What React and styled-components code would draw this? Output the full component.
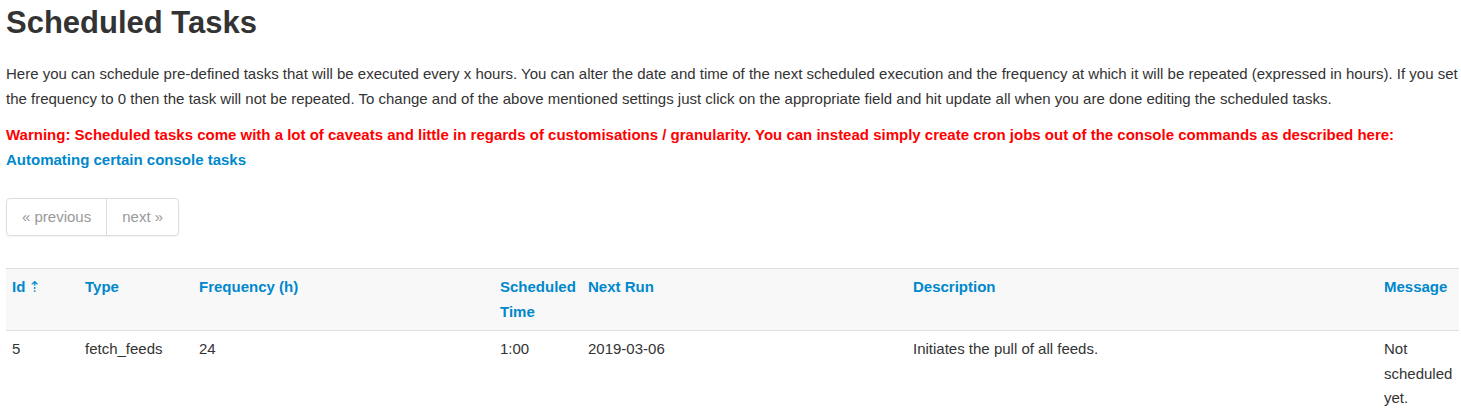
import React from "react";
import styled, { createGlobalStyle } from "styled-components";

const Global = createGlobalStyle`
  html, body { margin: 0; padding: 0; background: #fff; }
  body {
    font-family: "Liberation Sans", Arial, sans-serif;
    font-size: 15px;
    line-height: 24.5px;
    color: #333;
  }
`;

const Page = styled.div`
  padding: 0 2px 0 6px;
`;

const Title = styled.h2`
  margin: 3px 0 19px;
  font-size: 31px;
  line-height: 40px;
  font-weight: bold;
  color: #333;
`;

const Intro = styled.p`
  margin: 0 0 12px;
`;

const Warning = styled.p`
  margin: 0;
  color: #ff0000;
  font-weight: bold;
`;

const Link = styled.a`
  color: #0088cc;
  font-weight: bold;
  text-decoration: none;
`;

const Pager = styled.ul`
  display: inline-flex;
  list-style: none;
  margin: 26px 0 32px;
  padding: 0;
  border: 1px solid #ddd;
  border-radius: 4px;
  box-shadow: 0 1px 2px rgba(0, 0, 0, 0.05);
`;

const PagerItem = styled.li`
  padding: 6px 15px;
  line-height: 24px;
  color: #999;
  border-left: ${(p) => (p.$first ? "none" : "1px solid #ddd")};
`;

const Table = styled.table`
  width: 100%;
  border-collapse: collapse;
  table-layout: fixed;
  border-top: 1px solid #ddd;
`;

const HeadCell = styled.th`
  text-align: left;
  vertical-align: top;
  padding: 6px 6px;
  background: #f8f8f8;
  color: #0088cc;
  font-weight: bold;
  border-bottom: 1px solid #ddd;
`;

const Cell = styled.td`
  text-align: left;
  vertical-align: top;
  padding: 6px 6px;
`;

const SortIcon = styled.span`
  font-family: "DejaVu Sans", sans-serif;
  font-size: 15px;
  font-weight: normal;
  margin-left: 3px;
  color: #0088cc;
`;

const widths = [73, 114, 301, 88, 325, 471, 81];

export default function App() {
  return (
    <Page>
      <Global />
      <Title>Scheduled Tasks</Title>
      <Intro>
        Here you can schedule pre-defined tasks that will be executed every x hours. You can alter the date and time of the next scheduled execution and the frequency at which it will be repeated (expressed in hours). If you set the frequency to 0 then the task will not be repeated. To change and of the above mentioned settings just click on the appropriate field and hit update all when you are done editing the scheduled tasks.
      </Intro>
      <Warning>
        Warning: Scheduled tasks come with a lot of caveats and little in regards of customisations / granularity. You can instead simply create cron jobs out of the console commands as described here:
        <br />
        <Link href="#">Automating certain console tasks</Link>
      </Warning>
      <Pager>
        <PagerItem $first>« previous</PagerItem>
        <PagerItem>next »</PagerItem>
      </Pager>
      <Table>
        <colgroup>
          {widths.map((w, i) => (
            <col key={i} style={{ width: w }} />
          ))}
        </colgroup>
        <thead>
          <tr>
            <HeadCell>
              Id<SortIcon>⇡</SortIcon>
            </HeadCell>
            <HeadCell>Type</HeadCell>
            <HeadCell>Frequency (h)</HeadCell>
            <HeadCell>Scheduled Time</HeadCell>
            <HeadCell>Next Run</HeadCell>
            <HeadCell>Description</HeadCell>
            <HeadCell>Message</HeadCell>
          </tr>
        </thead>
        <tbody>
          <tr>
            <Cell>5</Cell>
            <Cell>fetch_feeds</Cell>
            <Cell>24</Cell>
            <Cell>1:00</Cell>
            <Cell>2019-03-06</Cell>
            <Cell>Initiates the pull of all feeds.</Cell>
            <Cell>Not scheduled yet.</Cell>
          </tr>
        </tbody>
      </Table>
    </Page>
  );
}
